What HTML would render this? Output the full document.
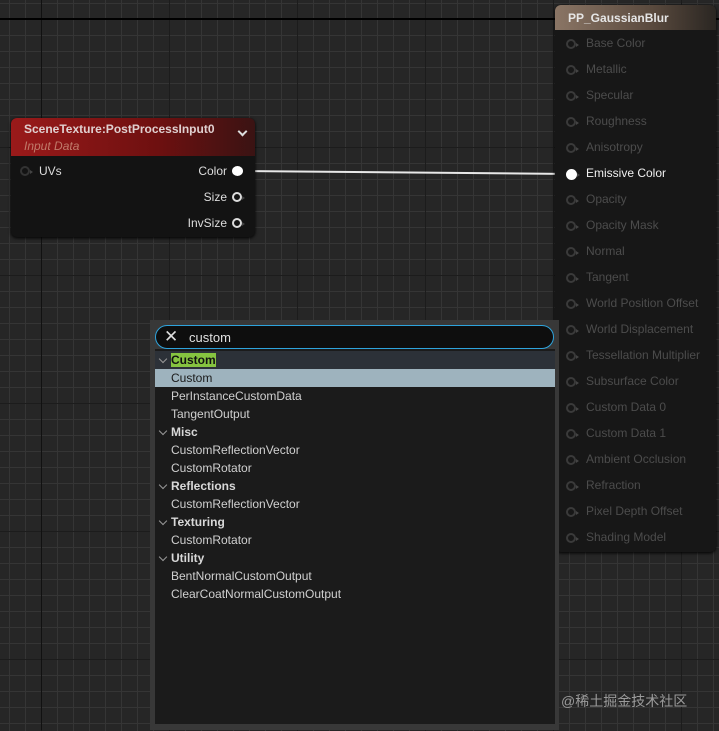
<!DOCTYPE html>
<html><head><meta charset="utf-8"><style>
*{margin:0;padding:0;box-sizing:border-box}
body{width:719px;height:730px;overflow:hidden;background:#262626;font-family:"Liberation Sans","Noto Sans CJK SC",sans-serif;font-size:12px;position:relative;
background-image:
linear-gradient(90deg,#1c1c1c 1px,transparent 1px),
linear-gradient(180deg,#1c1c1c 1px,transparent 1px),
linear-gradient(90deg,#353535 1px,transparent 1px),
linear-gradient(180deg,#353535 1px,transparent 1px);
background-size:128px 128px,128px 128px,16px 16px,16px 16px;
background-position:41px 0,0 19px,9px 0,0 3px;}
.abs{position:absolute}
.node{position:absolute;background:#131313;border-radius:6px;box-shadow:0 1px 3px #000}
.pinr{position:absolute;width:10px;height:10px;border-radius:50%;border:2px solid #444}
.pinr:after{content:"";position:absolute;right:-5px;top:2px;border-left:3px solid #444;border-top:2px solid transparent;border-bottom:2px solid transparent}
.row{position:absolute;left:0;right:0;height:18px;line-height:19px;color:#d0d0d0;padding-left:16px}
.cat{font-weight:bold;color:#d8d8d8;padding-left:16px}
.cat:before{content:"";position:absolute;left:5px;top:5px;width:5px;height:5px;border-right:1.5px solid #999;border-bottom:1.5px solid #999;transform:rotate(45deg)}
</style></head><body>
<div class="abs" style="left:41px;top:0;width:1px;height:730px;background:#111"></div>
<div class="abs" style="left:0;top:18px;width:719px;height:2px;background:#000"></div>
<svg class="abs" style="left:0;top:0" width="719" height="730"><path d="M244 171 L572 174" stroke="#e8e8e8" stroke-width="2"/></svg>

<!-- left node -->
<div class="node" style="left:11px;top:118px;width:244px;height:119px">
 <div style="height:38px;border-radius:6px 6px 0 0;background:linear-gradient(90deg,#9a1a1a,#6e1010 60%,#3a1313)"></div>
 <div class="abs" style="left:13px;top:4px;color:#e0d0d0;font-weight:bold;font-size:12px">SceneTexture:PostProcessInput0</div>
 <div class="abs" style="left:13px;top:21px;color:#c07a6a;font-style:italic;font-size:12px">Input Data</div>
 <div class="abs" style="left:228px;top:10px;width:7px;height:7px;border-right:2px solid #ddd;border-bottom:2px solid #ddd;transform:rotate(45deg)"></div>
 <div class="pinr" style="left:9px;top:48px;border-color:#333"></div>
 <div class="abs" style="left:28px;top:46px;color:#ddd">UVs</div>
 <div class="abs" style="right:28px;top:46px;color:#ddd">Color</div>
 <div class="abs" style="left:221px;top:48px;width:11px;height:10px;border-radius:50%;background:#fff"></div>
 <div class="abs" style="right:28px;top:72px;color:#ddd">Size</div>
 <div class="pinr" style="left:221px;top:74px;border-color:#ddd"></div>
 <div class="abs" style="right:28px;top:98px;color:#ddd">InvSize</div>
 <div class="pinr" style="left:221px;top:100px;border-color:#ddd"></div>
</div>

<!-- right node -->
<div class="node" style="left:555px;top:5px;width:161px;height:547px;background:#171717">
 <div style="height:25px;border-radius:6px 6px 0 0;background:linear-gradient(90deg,#8a7565,#5a4a3e 60%,#2a2622)"></div>
 <div class="abs" style="left:13px;top:6px;color:#e6e6e6;font-weight:bold">PP_GaussianBlur</div>
</div>
<div id="rp"></div>

<!-- popup -->
<div class="abs" style="left:150px;top:320px;width:409px;height:410px;background:#383838"></div>
<div class="abs" style="left:155px;top:349px;width:400px;height:375px;background:#1b1b1b"></div>
<div class="abs" style="left:155px;top:325px;width:399px;height:24px;border:1.5px solid #2ea3dc;border-radius:12px;background:#0e0e0e"></div>
<div class="abs" style="left:164px;top:329px;color:#ddd;font-size:17px;line-height:16px">✕</div>
<div class="abs" style="left:189px;top:330px;color:#e0e0e0;font-size:13px">custom</div>
<div class="abs" style="left:155px;top:351px;width:400px;height:380px">
 <div class="row cat" style="top:0;background:#2c3138"><span style="background:#86c440;color:#111">Custom</span></div>
 <div class="row" style="top:18px;background:#9eb3be;color:#1a1a1a">Custom</div>
 <div class="row" style="top:36px">PerInstanceCustomData</div>
 <div class="row" style="top:54px">TangentOutput</div>
 <div class="row cat" style="top:72px">Misc</div>
 <div class="row" style="top:90px">CustomReflectionVector</div>
 <div class="row" style="top:108px">CustomRotator</div>
 <div class="row cat" style="top:126px">Reflections</div>
 <div class="row" style="top:144px">CustomReflectionVector</div>
 <div class="row cat" style="top:162px">Texturing</div>
 <div class="row" style="top:180px">CustomRotator</div>
 <div class="row cat" style="top:198px">Utility</div>
 <div class="row" style="top:216px">BentNormalCustomOutput</div>
 <div class="row" style="top:234px">ClearCoatNormalCustomOutput</div>
</div>
<div class="abs" style="left:561px;top:691px;color:#9a9a9a;font-size:14px">@稀土掘金技术社区</div>

<script>
var n=["Base Color","Metallic","Specular","Roughness","Anisotropy","Emissive Color","Opacity","Opacity Mask","Normal","Tangent","World Position Offset","World Displacement","Tessellation Multiplier","Subsurface Color","Custom Data 0","Custom Data 1","Ambient Occlusion","Refraction","Pixel Depth Offset","Shading Model"];
var h="";n.forEach(function(t,i){var y=44+i*26;var e=i==5;
h+='<div class="pinr" style="left:566px;top:'+(y-5)+'px;'+(e?'background:#fff;border-color:#fff;width:11px;height:11px':'border-color:#3a3a3a')+'"></div>';
h+='<div class="abs" style="left:586px;top:'+(y-8)+'px;color:'+(e?'#f0f0f0':'#4c4c4c')+'">'+t+'</div>';});
document.getElementById("rp").innerHTML=h;
</script>
</body></html>
